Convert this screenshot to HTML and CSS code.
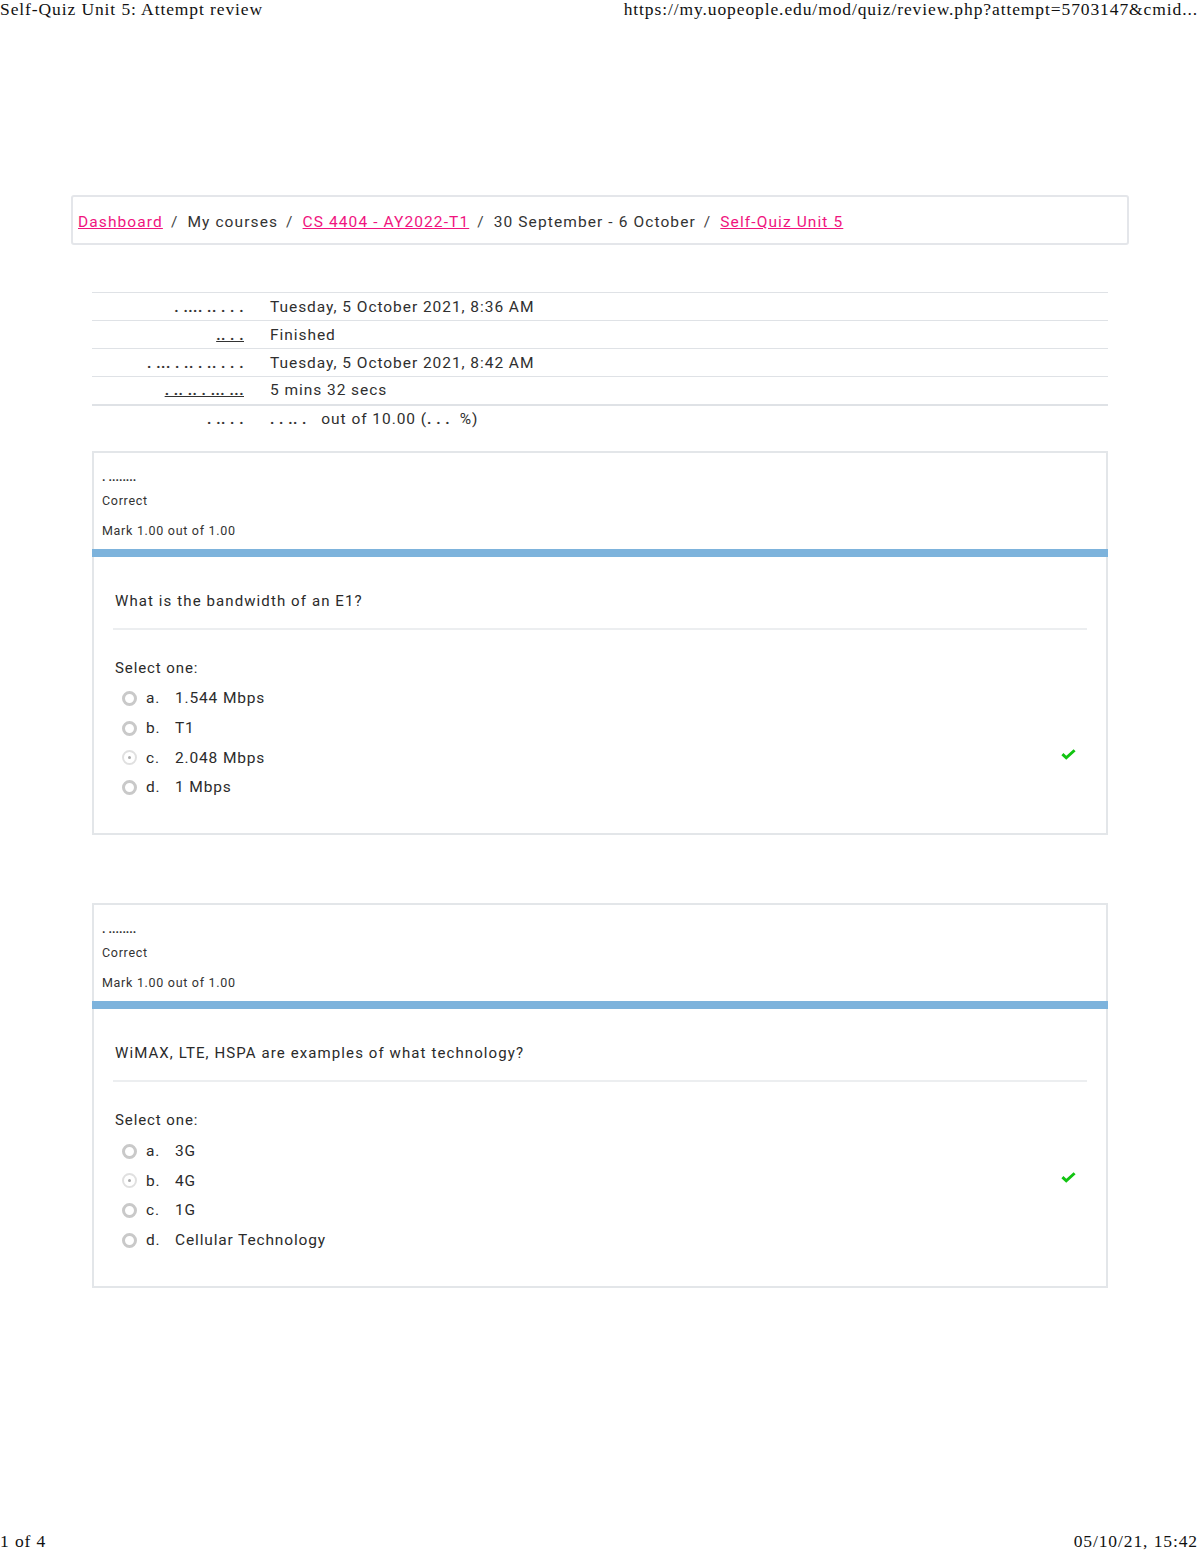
FILE: index.html
```html
<!DOCTYPE html>
<html>
<head>
<meta charset="utf-8">
<title>Self-Quiz Unit 5: Attempt review</title>
<link rel="stylesheet" href="styles.css">
</head>
<body>
<div class="page">
  <header class="print-head">
    <span>Self-Quiz Unit 5: Attempt review</span>
    <span>https://my.uopeople.edu/mod/quiz/review.php?attempt=5703147&amp;cmid...</span>
  </header>

  <nav class="crumbs">
    <a href="#">Dashboard</a><span class="sep">/</span>
    <span>My courses</span><span class="sep">/</span>
    <a href="#">CS 4404 - AY2022-T1</a><span class="sep">/</span>
    <span>30 September - 6 October</span><span class="sep">/</span>
    <a href="#">Self-Quiz Unit 5</a>
  </nav>

  <main class="content">
    <table class="summary">
      <tr><th><span class="dots">. .... .. . . .</span></th><td>Tuesday, 5 October 2021, 8:36 AM</td></tr>
      <tr><th><span class="dots ul">.. . .</span></th><td>Finished</td></tr>
      <tr><th><span class="dots">. ... . .. . .. . . .</span></th><td>Tuesday, 5 October 2021, 8:42 AM</td></tr>
      <tr><th><span class="dots ul">. .. .. . ... ...</span></th><td>5 mins 32 secs</td></tr>
      <tr class="grade"><th><span class="dots">. .. . .</span></th><td><span class="dots">. . .. .</span>&nbsp;&nbsp; out of 10.00 (<span class="dots">. . .</span>&nbsp; %)</td></tr>
    </table>

    <section class="que">
      <div class="que-info">
        <div class="qno"><span class="dots sm">. ........</span></div>
        <div class="state">Correct</div>
        <div class="mark">Mark 1.00 out of 1.00</div>
      </div>
      <div class="que-bar"></div>
      <div class="que-body">
        <p class="qtext">What is the bandwidth of an E1?</p>
        <p class="prompt">Select one:</p>
        <div class="answers">
          <div class="opt"><span class="radio"></span><span class="letter">a.</span><span>1.544 Mbps</span></div>
          <div class="opt"><span class="radio"></span><span class="letter">b.</span><span>T1</span></div>
          <div class="opt"><span class="radio on"></span><span class="letter">c.</span><span>2.048 Mbps</span><svg class="check" viewBox="0 0 16 12" width="15" height="12"><path d="M1.5 6.2 L5.6 10 L14.5 2" fill="none" stroke="#11c411" stroke-width="3.2"/></svg></div>
          <div class="opt"><span class="radio"></span><span class="letter">d.</span><span>1 Mbps</span></div>
        </div>
      </div>
    </section>

    <section class="que">
      <div class="que-info">
        <div class="qno"><span class="dots sm">. ........</span></div>
        <div class="state">Correct</div>
        <div class="mark">Mark 1.00 out of 1.00</div>
      </div>
      <div class="que-bar"></div>
      <div class="que-body">
        <p class="qtext">WiMAX, LTE, HSPA are examples of what technology?</p>
        <p class="prompt">Select one:</p>
        <div class="answers">
          <div class="opt"><span class="radio"></span><span class="letter">a.</span><span>3G</span></div>
          <div class="opt"><span class="radio on"></span><span class="letter">b.</span><span>4G</span><svg class="check" viewBox="0 0 16 12" width="15" height="12"><path d="M1.5 6.2 L5.6 10 L14.5 2" fill="none" stroke="#11c411" stroke-width="3.2"/></svg></div>
          <div class="opt"><span class="radio"></span><span class="letter">c.</span><span>1G</span></div>
          <div class="opt"><span class="radio"></span><span class="letter">d.</span><span>Cellular Technology</span></div>
        </div>
      </div>
    </section>
  </main>

  <footer class="print-foot">
    <span>1 of 4</span>
    <span>05/10/21, 15:42</span>
  </footer>
</div>
</body>
</html>
```

FILE: styles.css
```css
html, body {
  margin: 0;
  padding: 0;
  background: #fff;
}

.page {
  height: 1553px;
  display: flex;
  flex-direction: column;
  font-family: Roboto, "Liberation Sans", sans-serif;
  color: #2b2b2b;
}

.print-head,
.print-foot {
  display: flex;
  justify-content: space-between;
  font-family: "Liberation Serif", serif;
  font-size: 17.5px;
  letter-spacing: 0.9px;
  line-height: 18px;
  color: #111;
  padding-right: 2px;
}

.print-head {
  height: 18px;
}

.print-foot {
  margin-top: auto;
  height: 20px;
  padding-bottom: 1px;
}

.crumbs {
  margin: 177px 0 0 71px;
  width: 1058px;
  height: 50px;
  box-sizing: border-box;
  border: 2px solid #e4e6ea;
  border-radius: 3px;
  padding: 3px 0 0 5px;
  display: flex;
  align-items: center;
  font-size: 15.5px;
  letter-spacing: 1.1px;
  color: #333;
}

.crumbs a {
  color: #f0147e;
  text-decoration: underline;
}

.crumbs .sep {
  padding: 0 9px 0 8px;
  color: #444;
}

.content {
  margin: 47px 0 0 92px;
  width: 1016px;
}

.summary {
  width: 100%;
  border-collapse: collapse;
  font-size: 15.5px;
  letter-spacing: 0.95px;
}

.summary tr {
  border-top: 1px solid #dfe2e6;
  height: 28px;
}

.summary tr.grade {
  border-top: 2px solid #dfe2e6;
}

.summary th {
  width: 152px;
  text-align: right;
  font-weight: normal;
  padding: 0 26px 0 0;
}

.summary td {
  padding: 0;
  color: #2f2f2f;
}

.dots {
  font-size: 15px;
  letter-spacing: 0.5px;
  color: #333;
  font-weight: bold;
}

.dots.ul {
  text-decoration: underline;
}

.dots.sm {
  font-size: 12px;
  letter-spacing: 0;
}

.que {
  margin-top: 18px;
  border: 2px solid #e3e6e9;
  margin-bottom: 68px;
}

.que + .que {
  margin-top: 0;
}

.que-info {
  padding: 17px 0 11px 8px;
  font-size: 12.5px;
  letter-spacing: 0.7px;
  color: #333;
  display: flex;
  flex-direction: column;
}

.que-info .qno {
  height: 24px;
  line-height: 14px;
}

.que-info .state {
  height: 30px;
  line-height: 14px;
}

.que-info .mark {
  line-height: 14px;
}

.que-bar {
  height: 8px;
  background: #7db3dc;
  margin: 0 -2px;
}

.que-body {
  padding: 0 19px 31px;
}

.qtext {
  margin: 0;
  padding: 34px 0 17px 2px;
  border-bottom: 2px solid #eceef0;
  font-size: 15px;
  letter-spacing: 1.1px;
  line-height: 20px;
  color: #2a2a2a;
}

.prompt {
  margin: 27px 0 0 2px;
  font-size: 15px;
  letter-spacing: 0.9px;
  line-height: 22px;
}

.answers {
  margin-top: 5px;
  padding-left: 9px;
  font-size: 15.5px;
  letter-spacing: 0.85px;
}

.opt {
  display: flex;
  align-items: center;
  height: 29.7px;
}

.radio {
  width: 9px;
  height: 9px;
  border: 3px solid #c9c9c9;
  border-radius: 50%;
  background: #fff;
  position: relative;
  margin-right: 9px;
}

.radio.on {
  border-color: #e0e0e0;
  border-width: 2px;
  width: 11px;
  height: 11px;
}

.radio.on::after {
  content: "";
  position: absolute;
  left: 4px;
  top: 4px;
  width: 3px;
  height: 3px;
  border-radius: 50%;
  background: #aaa;
}

.letter {
  width: 29px;
}

.check {
  margin-left: auto;
  margin-right: 11px;
  margin-bottom: 8px;
}
```
